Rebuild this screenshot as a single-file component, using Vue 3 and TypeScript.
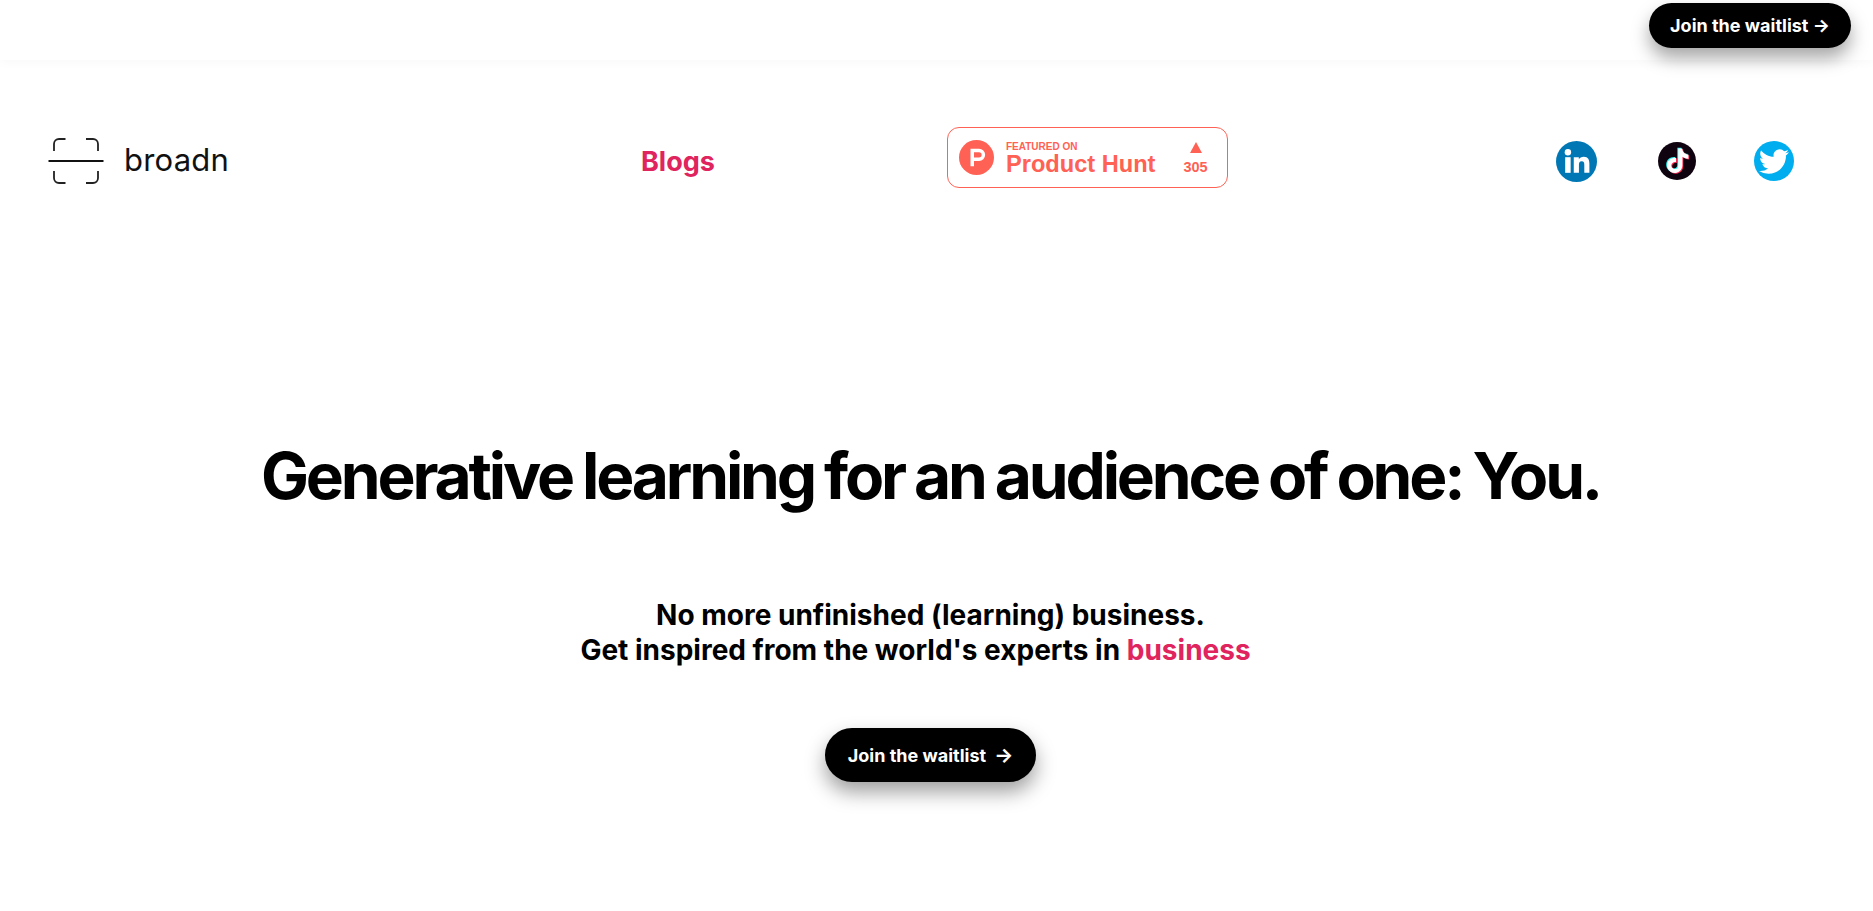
<script setup lang="ts">
const tiktok = 'M12.525.02c1.31-.02 2.61-.01 3.91-.02.08 1.53.63 3.09 1.75 4.17 1.12 1.11 2.7 1.62 4.24 1.79v4.03c-1.44-.05-2.89-.35-4.2-.97-.57-.26-1.1-.59-1.62-.93-.01 2.92.01 5.84-.02 8.75-.08 1.4-.54 2.79-1.35 3.94-1.31 1.92-3.58 3.17-5.91 3.21-1.43.08-2.86-.31-4.08-1.03-2.02-1.19-3.44-3.37-3.65-5.71-.02-.5-.03-1-.01-1.49.18-1.9 1.12-3.72 2.58-4.96 1.66-1.44 3.98-2.13 6.15-1.72.02 1.48-.04 2.96-.04 4.44-.99-.32-2.15-.23-3.02.37-.63.41-1.11 1.04-1.36 1.75-.21.51-.15 1.07-.14 1.61.24 1.64 1.82 3.02 3.5 2.87 1.12-.01 2.19-.66 2.77-1.61.19-.33.4-.67.41-1.06.1-1.79.06-3.57.07-5.36.01-4.03-.01-8.05.02-12.07z'
const twitter = 'M23.953 4.57a10 10 0 01-2.825.775 4.958 4.958 0 002.163-2.723c-.951.555-2.005.959-3.127 1.184a4.92 4.92 0 00-8.384 4.482C7.69 8.095 4.067 6.13 1.64 3.162a4.822 4.822 0 00-.666 2.475c0 1.71.87 3.213 2.188 4.096a4.904 4.904 0 01-2.228-.616v.06a4.923 4.923 0 003.946 4.827 4.996 4.996 0 01-2.212.085 4.936 4.936 0 004.604 3.417 9.867 9.867 0 01-6.102 2.105c-.39 0-.779-.023-1.17-.067a13.995 13.995 0 007.557 2.209c9.053 0 13.998-7.496 13.998-13.985 0-.21 0-.42-.015-.63A9.935 9.935 0 0024 4.59z'
</script>

<template>
  <div class="page">
    <header class="topbar">
      <a class="btn btn-top">Join the waitlist →</a>
    </header>

    <nav class="nav">
      <div class="logo">
        <svg class="logo-mark" width="56" height="48" viewBox="0 0 56 48" fill="none" stroke="#222" stroke-width="1.8">
          <path d="M6 14V7a5 5 0 0 1 5-5h6.5M38 2h7a5 5 0 0 1 5 5v7M6 34v7a5 5 0 0 0 5 5h6.5M38 46h7a5 5 0 0 0 5-5v-7" />
          <path d="M0.5 24h55" stroke="#111" />
        </svg>
        <span class="logo-text">broadn</span>
      </div>
      <a class="blogs">Blogs</a>
      <div class="ph">
        <svg class="ph-mark" width="35" height="35" viewBox="0 0 35 35">
          <circle cx="17.5" cy="17.5" r="17.5" fill="#ff6154" />
          <path d="M20 17.5h-5v-5.3h5a2.65 2.65 0 0 1 0 5.3zM20 8.7h-8.5v17.5H15v-5.2h5a6.15 6.15 0 0 0 0-12.3z" fill="#fff" />
        </svg>
        <div class="ph-text">
          <span class="ph-small">FEATURED ON</span>
          <span class="ph-big">Product Hunt</span>
        </div>
        <div class="ph-votes">
          <span class="ph-tri"></span>
          <span class="ph-count">305</span>
        </div>
      </div>
      <div class="socials">
        <svg class="s-in" width="41" height="41" viewBox="0 0 42 42">
          <circle cx="21" cy="21" r="21" fill="#0077b5" />
          <circle cx="12.2" cy="11.6" r="3.3" fill="#fff" />
          <rect x="9.4" y="16.6" width="5.6" height="16" fill="#fff" />
          <path d="M18.2 16.6h5.2v2.2c.9-1.5 2.7-2.6 5-2.6 4.6 0 5.8 3 5.8 7.2v9.2H29v-8.1c0-2-.4-3.8-2.7-3.8s-2.8 1.8-2.8 3.7v8.2h-5.3z" fill="#fff" />
        </svg>
        <svg class="s-tt" width="38" height="38" viewBox="0 0 38 38">
          <circle cx="19" cy="19" r="19" fill="#0f0310" />
          <g transform="translate(7.5 6.5) scale(1.02)">
            <path :d="tiktok" fill="#25f4ee" transform="translate(-.9 -.7)" />
            <path :d="tiktok" fill="#fe2c55" transform="translate(.9 .7)" />
            <path :d="tiktok" fill="#fff" />
          </g>
        </svg>
        <svg class="s-tw" width="40" height="40" viewBox="0 0 40 40">
          <circle cx="20" cy="20" r="20" fill="#00aeef" />
          <path :d="twitter" fill="#fff" transform="translate(5 5.5) scale(1.25)" />
        </svg>
      </div>
    </nav>

    <main class="hero">
      <h1 class="title">Generative learning for an audience of one: You.</h1>
      <p class="sub">No more unfinished (learning) business.<br />Get inspired from the world's experts in <span class="accent">business</span></p>
      <a class="btn btn-main">Join the waitlist <span class="arrow">→</span></a>
    </main>
  </div>
</template>

<style scoped>
.page {
  width: 1873px;
  height: 911px;
  overflow: hidden;
  background: #fff;
  color: #000;
  font-family: Inter, "Liberation Sans", sans-serif;
}
.topbar {
  height: 60px;
  padding: 3px 22px 0 0;
  box-sizing: border-box;
  display: flex;
  justify-content: flex-end;
  align-items: flex-start;
  background: #fff;
  box-shadow: 0 2px 10px rgba(0, 0, 0, 0.03);
}
.btn {
  display: inline-flex;
  align-items: center;
  justify-content: center;
  background: #000;
  color: #fff;
  font-weight: 700;
  border-radius: 999px;
  box-sizing: border-box;
  white-space: nowrap;
}
.btn-top {
  width: 202px;
  height: 45px;
  font-size: 18px;
  box-shadow: 0 10px 18px rgba(0, 0, 0, 0.35);
}
.btn-main {
  width: 211px;
  height: 54px;
  font-size: 18px;
  box-shadow: 0 10px 20px rgba(0, 0, 0, 0.38);
  margin-top: 60px;
}
.arrow {
  margin-left: 8px;
  font-size: 20px;
}
.nav {
  display: grid;
  grid-template-columns: 593px 306px 608px 1fr;
  align-items: center;
  height: 68px;
  margin-top: 67px;
  padding-left: 48px;
}
.logo {
  display: flex;
  align-items: center;
  gap: 20px;
}
.logo-text {
  font-family: Inter, sans-serif;
  font-weight: 400;
  font-size: 31px;
  letter-spacing: 0.2px;
  color: #111;
  line-height: 1;
  margin-top: -3px;
}
.blogs {
  font-size: 27px;
  font-weight: 700;
  color: #e0245e;
}
.ph {
  align-self: start;
  width: 281px;
  height: 61px;
  box-sizing: border-box;
  border: 1px solid #ff6154;
  border-radius: 12px;
  display: flex;
  align-items: center;
  padding-left: 11px;
  color: #ff6154;
  font-family: "Liberation Sans", sans-serif;
  font-weight: 700;
}
.ph-text {
  display: flex;
  flex-direction: column;
  margin: 2px 0 0 12px;
}
.ph-small {
  font-size: 10px;
  line-height: 11px;
}
.ph-big {
  font-size: 23.6px;
  line-height: 24px;
}
.ph-votes {
  display: flex;
  flex-direction: column;
  align-items: center;
  margin: 1px 0 0 28px;
  gap: 7px;
}
.ph-tri {
  width: 0;
  height: 0;
  border-left: 6.5px solid transparent;
  border-right: 6.5px solid transparent;
  border-bottom: 11px solid #ff6154;
}
.ph-count {
  font-size: 14.5px;
  line-height: 14px;
}
.socials {
  display: flex;
  align-items: center;
}
.s-in {
  margin-left: 1px;
}
.s-tt {
  margin: 0 58px 0 61px;
}
.hero {
  display: flex;
  flex-direction: column;
  align-items: center;
  width: 1861px;
  padding-top: 243px;
}
.title {
  margin: 0;
  font-size: 64px;
  line-height: 75px;
  font-weight: 700;
  letter-spacing: -3.15px;
  word-spacing: -2px;
  white-space: nowrap;
}
.sub {
  margin: 85px 0 0;
  font-size: 28px;
  line-height: 35px;
  font-weight: 700;
  text-align: center;
}
.accent {
  display: inline-block;
  padding-right: 30px;
  color: #e0245e;
}
</style>
